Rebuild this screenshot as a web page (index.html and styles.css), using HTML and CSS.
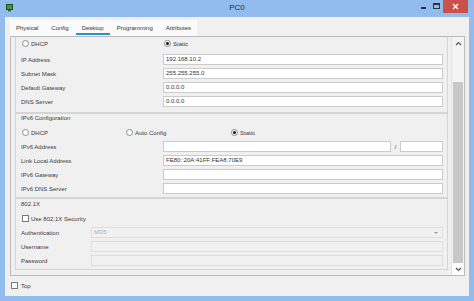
FILE: index.html
```html
<!DOCTYPE html>
<html>
<head>
    <meta charset="utf-8">
    <title>PC0</title>
    <link rel="stylesheet" href="styles.css">
</head>
<body>
    <div class="window">
        <div class="titlebar">
            <svg class="app-icon" width="7" height="8" viewBox="0 0 7 8">
                <rect x="0.5" y="0.5" width="6" height="5" fill="#3f9a3f" stroke="#1f4f1f"/>
                <rect x="2" y="6" width="3" height="1.5" fill="#555"/>
            </svg>
            <div class="title">PC0</div>
            <div class="controls">
                <span class="ctl-min"></span>
                <span class="ctl-max"></span>
                <span class="ctl-close">
                    <svg width="7" height="7" viewBox="0 0 7 7">
                        <path d="M1 1 L6 6 M6 1 L1 6" stroke="#fff" stroke-width="1.4"/>
                    </svg>
                </span>
            </div>
        </div>

        <div class="client">
            <div class="tabs">
                <span class="tab">Physical</span>
                <span class="tab">Config</span>
                <span class="tab active">Desktop</span>
                <span class="tab">Programming</span>
                <span class="tab">Attributes</span>
            </div>

            <div class="panel">
                <div class="content">
                    <!-- IPv4: top of the box is scrolled away -->
                    <div class="group group-ipv4">
                        <div class="radios two">
                            <label class="opt"><span class="radio"></span>DHCP</label>
                            <label class="opt"><span class="radio checked"></span>Static</label>
                        </div>
                        <div class="fields">
                            <span class="lbl">IP Address</span>
                            <div class="input">192.168.10.2</div>
                            <span class="lbl">Subnet Mask</span>
                            <div class="input">255.255.255.0</div>
                            <span class="lbl">Default Gateway</span>
                            <div class="input">0.0.0.0</div>
                            <span class="lbl">DNS Server</span>
                            <div class="input">0.0.0.0</div>
                        </div>
                    </div>

                    <div class="group">
                        <div class="group-title">IPv6 Configuration</div>
                        <div class="radios three">
                            <label class="opt"><span class="radio"></span>DHCP</label>
                            <label class="opt"><span class="radio"></span>Auto Config</label>
                            <label class="opt"><span class="radio checked"></span>Static</label>
                        </div>
                        <div class="fields">
                            <span class="lbl">IPv6 Address</span>
                            <div class="prefix-row">
                                <div class="input grow"></div>
                                <span class="slash">/</span>
                                <div class="input prefix"></div>
                            </div>
                            <span class="lbl">Link Local Address</span>
                            <div class="input">FE80::20A:41FF:FEA8:70E9</div>
                            <span class="lbl">IPv6 Gateway</span>
                            <div class="input"></div>
                            <span class="lbl">IPv6 DNS Server</span>
                            <div class="input"></div>
                        </div>
                    </div>

                    <div class="group group-dot1x">
                        <div class="group-title">802.1X</div>
                        <label class="opt check-row"><span class="checkbox"></span>Use 802.1X Security</label>
                        <div class="fields narrow">
                            <span class="lbl">Authentication</span>
                            <div class="input disabled select">MD5<span class="caret"></span></div>
                            <span class="lbl">Username</span>
                            <div class="input disabled"></div>
                            <span class="lbl">Password</span>
                            <div class="input disabled"></div>
                        </div>
                    </div>
                </div>

                <div class="scrollbar">
                    <div class="sb-btn">
                        <svg width="7" height="5" viewBox="0 0 7 5"><path d="M1 4 L3.5 1.5 L6 4" fill="none" stroke="#555" stroke-width="1.2"/></svg>
                    </div>
                    <div class="sb-track"><div class="sb-thumb"></div></div>
                    <div class="sb-btn down">
                        <svg width="7" height="5" viewBox="0 0 7 5"><path d="M1 1 L3.5 3.5 L6 1" fill="none" stroke="#555" stroke-width="1.2"/></svg>
                    </div>
                </div>
            </div>

            <div class="bottom">
                <span class="checkbox"></span>
                <span>Top</span>
            </div>
        </div>
    </div>
</body>
</html>
```

FILE: styles.css
```css
body {
    margin: 0;
    background: #93bcee;
    font-family: "Liberation Sans", Arial, sans-serif;
    font-size: 6px;
    color: #3a3a3a;
}
.window {
    width: 474px;
    height: 301px;
    display: flex;
    flex-direction: column;
    background: #93bcee;
}
.titlebar {
    height: 17px;
    display: grid;
    grid-template-columns: 1fr auto 1fr;
    align-items: start;
}
.app-icon {
    margin: 4px 0 0 6px;
}
.title {
    font-size: 8px;
    line-height: 16px;
    color: #2b2b2b;
}
.controls {
    justify-self: end;
    display: flex;
    align-items: flex-start;
    margin-right: 6px;
}
.ctl-min {
    width: 5px;
    height: 1.5px;
    background: #333;
    margin: 7px 7px 0 0;
}
.ctl-max {
    width: 5px;
    height: 3px;
    border: 1px solid #333;
    border-top-width: 2px;
    margin: 3px 3px 0 0;
}
.ctl-close {
    width: 25px;
    height: 13px;
    background: #c9504b;
    display: flex;
    align-items: center;
    justify-content: center;
}
.client {
    flex: 1;
    margin: 0 5px 5px;
    background: #f0f0f0;
    padding: 3px 4px 0 5px;
    display: flex;
    flex-direction: column;
}
.tabs {
    display: flex;
    align-self: flex-start;
    height: 16px;
    background: #fafafa;
    gap: 1px;
}
.tab {
    padding: 4px 6px 0;
    line-height: 9px;
    height: 9px;
    border-bottom: 2px solid transparent;
    color: #333;
}
.tab.active {
    border-bottom-color: #2f93bf;
}
.panel {
    display: flex;
    height: 240px;
    box-sizing: border-box;
    border: 1px solid #bababa;
}
.content {
    flex: 1;
    overflow: hidden;
}
.group {
    border: 1px solid #d5d5d5;
    margin: 0 3px 0 4px;
    padding: 0 4px 3px 5px;
}
.group-ipv4 {
    border-top: none;
    padding-top: 1px;
    padding-bottom: 5px;
}
.group-title {
    line-height: 8px;
    margin-bottom: 5px;
}
.group-dot1x .group-title {
    padding-top: 1px;
}
.radios {
    display: grid;
    height: 11px;
    align-items: center;
    margin-bottom: 3px;
}
.radios.two {
    grid-template-columns: 142px 1fr;
    margin-bottom: 5px;
}
.radios.three {
    grid-template-columns: 104px 105px 1fr;
}
.opt {
    display: flex;
    align-items: center;
    gap: 2px;
    margin-left: 1px;
}
.radio {
    width: 7px;
    height: 7px;
    box-sizing: border-box;
    border: 1px solid #8a8a8a;
    border-radius: 50%;
    background: #fff;
    display: flex;
    align-items: center;
    justify-content: center;
}
.radio.checked::after {
    content: "";
    width: 3px;
    height: 3px;
    border-radius: 50%;
    background: #111;
}
.checkbox {
    width: 7px;
    height: 7px;
    box-sizing: border-box;
    border: 1px solid #7a7a7a;
    background: #fff;
}
.check-row {
    height: 11px;
    margin-bottom: 3px;
}
.fields {
    display: grid;
    grid-template-columns: 142px 1fr;
    grid-auto-rows: 11px;
    row-gap: 3px;
    align-items: center;
}
.fields.narrow {
    grid-template-columns: 70px 1fr;
}
.input {
    height: 11px;
    box-sizing: border-box;
    border: 1px solid #cbcbcb;
    background: #fff;
    padding: 0 2px;
    line-height: 9px;
    color: #333;
}
.input.disabled {
    background: #f1f1f1;
    border-color: #dedede;
    color: #b0b0b0;
}
.select {
    display: flex;
    justify-content: space-between;
    align-items: center;
}
.caret {
    width: 0;
    height: 0;
    border-left: 2px solid transparent;
    border-right: 2px solid transparent;
    border-top: 2px solid #999;
    margin-right: 2px;
}
.prefix-row {
    display: flex;
    align-items: center;
}
.grow {
    flex: 1;
}
.slash {
    width: 9px;
    text-align: center;
}
.prefix {
    width: 43px;
}
.scrollbar {
    width: 12px;
    border-left: 1px solid #e2e2e2;
    display: flex;
    flex-direction: column;
    background: #f4f4f4;
}
.sb-btn {
    height: 12px;
    display: flex;
    align-items: center;
    justify-content: center;
}
.sb-btn.down {
    background: #fbfbfb;
}
.sb-track {
    flex: 1;
    padding-top: 33px;
    display: flex;
}
.sb-thumb {
    flex: 1;
    margin: 0 1px;
    background: #c8c8c8;
}
.bottom {
    height: 19px;
    display: flex;
    align-items: center;
    gap: 3px;
    padding-left: 1px;
}
```
